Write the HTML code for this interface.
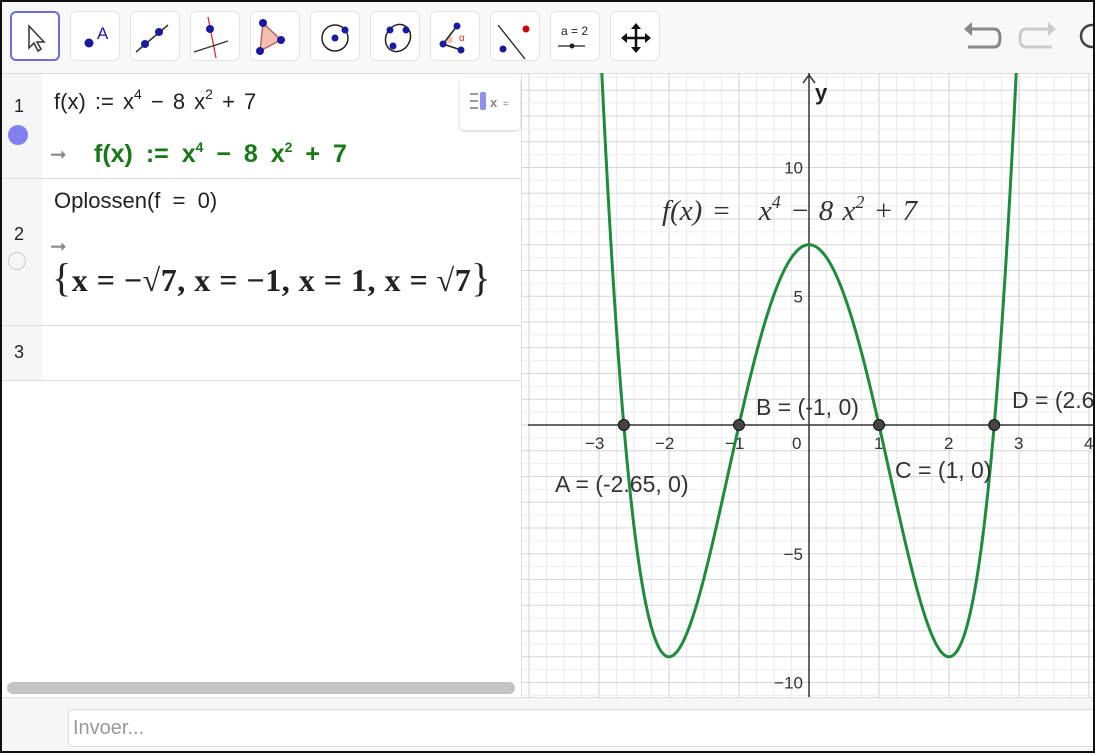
<!DOCTYPE html>
<html><head><meta charset="utf-8"><style>
body{margin:0;width:1095px;height:753px;overflow:hidden;font-family:"Liberation Sans",sans-serif;background:#fff;position:relative}
.frame{position:absolute;inset:0;border:2px solid #111;box-sizing:border-box;pointer-events:none;z-index:10}
.tb{position:absolute;left:0;top:0;width:1095px;height:73px;background:#f8f8f8;border-bottom:1px solid #ddd}
.btn{position:absolute;top:11px;width:50px;height:50px;background:#fff;border:1px solid #e3e3e3;border-radius:6px;box-sizing:border-box}
.btn svg{position:absolute;left:0;top:0}
.alg{position:absolute;left:2px;top:74px;width:519px;height:623px;background:#fff;border-right:1px solid #ddd}
.num{position:absolute;left:0;width:40px;background:#f6f6f6}
.row{position:absolute;left:0;width:519px;border-bottom:1px solid #ddd}
.t{position:absolute;font-size:22px;color:#222;white-space:nowrap}
sup{font-size:14px;vertical-align:10px}
.bottom{position:absolute;left:0;top:697px;width:1095px;height:56px;background:#f6f6f6;border-top:1px solid #ddd}
</style></head><body>
<div class="tb">
 <div class="btn" style="left:10px;border:2px solid #6d6de0"><svg width="48" height="48"><path d="M17 13 L17 35 L22 30 L26 38 L29 36 L25 29 L32 29 Z" fill="#fff" stroke="#333" stroke-width="1.5"/></svg></div>
 <div class="btn" style="left:70px"><svg width="50" height="50"><circle cx="18" cy="31" r="4.5" fill="#1a1aa0"/><text x="26" y="27" font-size="17" fill="#1a1aa0" font-family="Liberation Sans">A</text></svg></div>
 <div class="btn" style="left:130px"><svg width="50" height="50"><line x1="5" y1="40" x2="37" y2="13" stroke="#333" stroke-width="1.5"/><circle cx="14" cy="32" r="4" fill="#1a1aa0"/><circle cx="28" cy="20" r="4" fill="#1a1aa0"/></svg></div>
 <div class="btn" style="left:190px"><svg width="50" height="50"><line x1="17" y1="5" x2="25" y2="46" stroke="#c33" stroke-width="1.3"/><line x1="3" y1="40" x2="37" y2="29" stroke="#333" stroke-width="1.3"/><circle cx="19" cy="17" r="4" fill="#1a1aa0"/></svg></div>
 <div class="btn" style="left:250px"><svg width="50" height="50"><path d="M12 11 L30 28 L9 39 Z" fill="#f2c0b0" stroke="#b55" stroke-width="1.3"/><circle cx="12" cy="11" r="4" fill="#1a1aa0"/><circle cx="30" cy="28" r="4" fill="#1a1aa0"/><circle cx="9" cy="39" r="4" fill="#1a1aa0"/></svg></div>
 <div class="btn" style="left:310px"><svg width="50" height="50"><circle cx="24" cy="26" r="13" fill="none" stroke="#222" stroke-width="1.5"/><circle cx="24" cy="26" r="3.5" fill="#1a1aa0"/><circle cx="34" cy="18" r="3.5" fill="#1a1aa0"/></svg></div>
 <div class="btn" style="left:370px"><svg width="50" height="50"><ellipse cx="27" cy="26" rx="12" ry="14" transform="rotate(30 27 26)" fill="none" stroke="#222" stroke-width="1.5"/><circle cx="19" cy="18" r="3.5" fill="#1a1aa0"/><circle cx="35" cy="18" r="3.5" fill="#1a1aa0"/><circle cx="22" cy="34" r="3.5" fill="#1a1aa0"/></svg></div>
 <div class="btn" style="left:430px"><svg width="50" height="50"><path d="M14 32 L22 30 A9 9 0 0 0 19 23 Z" fill="#f2c0b0"/><line x1="12" y1="32" x2="26" y2="14" stroke="#222" stroke-width="1.5"/><line x1="12" y1="32" x2="30" y2="38" stroke="#222" stroke-width="1.5"/><circle cx="12" cy="32" r="3.5" fill="#1a1aa0"/><circle cx="26" cy="14" r="3.5" fill="#1a1aa0"/><circle cx="30" cy="38" r="3.5" fill="#1a1aa0"/><text x="28" y="29" font-size="10" fill="#c33">α</text></svg></div>
 <div class="btn" style="left:490px"><svg width="50" height="50"><line x1="7" y1="13" x2="34" y2="47" stroke="#222" stroke-width="1.3"/><circle cx="12" cy="37" r="3.5" fill="#1a1aa0"/><circle cx="35" cy="17" r="3.5" fill="#c00"/></svg></div>
 <div class="btn" style="left:550px"><svg width="50" height="50"><text x="10" y="23" font-size="12" fill="#222" font-family="Liberation Sans">a = 2</text><line x1="7" y1="34" x2="34" y2="34" stroke="#222" stroke-width="1.3"/><circle cx="21" cy="34" r="2.5" fill="#222"/></svg></div>
 <div class="btn" style="left:610px"><svg width="50" height="50"><path d="M25 14 V38 M13 26 H37" stroke="#111" stroke-width="2.5"/><path d="M25 11 L20 17 H30Z M25 41 L20 35 H30Z M10 26 L16 21 V31Z M40 26 L34 21 V31Z" fill="#111"/></svg></div>
 <svg style="position:absolute;left:960px;top:18px" width="135" height="40"><path d="M10 11 H34 Q40 11 40 20 Q40 29 34 29 H8" fill="none" stroke="#888" stroke-width="3"/><path d="M4 11 L12 4 V18Z" fill="#888"/><path d="M90 11 H66 Q60 11 60 20 Q60 29 66 29 H92" fill="none" stroke="#ccc" stroke-width="3"/><path d="M96 11 L88 4 V18Z" fill="#ccc"/><circle cx="132" cy="18" r="11" fill="none" stroke="#444" stroke-width="2.5"/></svg>
</div>

<div class="alg">
 <div class="num" style="top:0;height:306px"></div>
 <div class="row" style="top:0;height:104px"></div>
 <div class="row" style="top:0;height:251px"></div>
 <div class="row" style="top:0;height:306px"></div>
 <div class="t" style="left:12px;top:22px;font-size:18px">1</div>
 <div style="position:absolute;left:6px;top:51px;width:20px;height:20px;border-radius:50%;background:#8080f0"></div>
 <div class="t" style="left:52px;top:12px;word-spacing:3px">f(x) :=&nbsp;x<sup>4</sup>&nbsp;−&nbsp;8&nbsp;x<sup>2</sup>&nbsp;+&nbsp;7</div>
 <div class="t" style="left:48px;top:68px;color:#888;font-size:20px">➞</div>
 <div class="t" style="left:92px;top:65px;color:#187818;font-weight:bold;font-size:25px;word-spacing:6px">f(x) :=&nbsp;x<sup>4</sup>&nbsp;−&nbsp;8&nbsp;x<sup>2</sup>&nbsp;+&nbsp;7</div>
 <div style="position:absolute;left:458px;top:4px;width:60px;height:52px;background:#fff;box-shadow:0 1px 3px rgba(0,0,0,.2);border-radius:4px"><svg width="60" height="52"><path d="M10 16H18M10 23H18M10 30H18" stroke="#999" stroke-width="2"/><rect x="20" y="14" width="6" height="18" rx="2" fill="#9090ee"/><text x="30" y="29" font-size="13" fill="#888" font-weight="bold">x</text><text x="43" y="29" font-size="10" fill="#888">=</text></svg></div>
 <div class="t" style="left:12px;top:150px;font-size:18px">2</div>
 <div style="position:absolute;left:6px;top:178px;width:18px;height:18px;border-radius:50%;border:1px solid #ccc;box-sizing:border-box"></div>
 <div class="t" style="left:52px;top:114px">Oplossen(f &nbsp;= &nbsp;0)</div>
 <div class="t" style="left:48px;top:160px;color:#888;font-size:20px">➞</div>
 <div class="t" style="left:50px;top:180px;font-family:'Liberation Serif',serif;font-size:32px;font-weight:bold;letter-spacing:0.5px"><span style="font-weight:normal;font-size:40px">{</span>x&nbsp;=&nbsp;−√7,&nbsp;x&nbsp;=&nbsp;−1,&nbsp;x&nbsp;=&nbsp;1,&nbsp;x&nbsp;=&nbsp;√7<span style="font-weight:normal;font-size:40px">}</span></div>
 <div class="t" style="left:12px;top:268px;font-size:18px">3</div>
 <div style="position:absolute;left:5px;top:608px;width:508px;height:12px;border-radius:6px;background:#c4c4c4"></div>
</div>

<svg id="g" style="position:absolute;left:522px;top:73px" width="573" height="624"></svg>

<div class="bottom"><div style="position:absolute;left:68px;top:11px;width:1040px;height:36px;background:#fff;border:1px solid #ddd;border-radius:4px;font-size:20px;color:#999;line-height:36px;padding-left:4px">Invoer...</div></div>
<div class="frame"></div>
<script>
var g=document.getElementById('g'),ox=287,oy=352,sx=70,sy=25.75,h='';
for(var u=-5;u<=5;u+=0.25){var x=ox+u*sx;var maj=Math.abs(u-Math.round(u))<1e-6;h+='<line x1="'+x+'" y1="0" x2="'+x+'" y2="624" stroke="'+(maj?'#cfcfcf':'#eaeaea')+'"/>';}
for(var v=-12;v<=14;v+=0.5){var y=oy-v*sy;var maj=Math.abs(v-Math.round(v))<1e-6;h+='<line x1="0" y1="'+y+'" x2="573" y2="'+y+'" stroke="'+(maj?'#d6d6d6':'#eeeeee')+'"/>';}
h+='<line x1="6" y1="'+oy+'" x2="573" y2="'+oy+'" stroke="#333" stroke-width="1.5"/><line x1="'+ox+'" y1="0" x2="'+ox+'" y2="624" stroke="#333" stroke-width="1.5"/>';
h+='<path d="M'+(ox-6)+' 10 L'+ox+' 2 L'+(ox+6)+' 10" fill="none" stroke="#333" stroke-width="1.5"/>';
var lb=[[-3,'−3'],[-2,'−2'],[-1,'−1'],[1,'1'],[2,'2'],[3,'3'],[4,'4']];
lb.forEach(function(l){h+='<text x="'+(ox+l[0]*sx-(l[0]<0?14:5))+'" y="'+(oy+24)+'" font-size="17" fill="#333" font-family="Liberation Sans">'+l[1]+'</text>';});
h+='<text x="'+(ox-17)+'" y="'+(oy+24)+'" font-size="17" fill="#333" font-family="Liberation Sans">0</text>';
[[10,'10'],[5,'5'],[-5,'−5'],[-10,'−10']].forEach(function(l){h+='<text x="'+(ox-6)+'" y="'+(oy-l[0]*sy+6)+'" font-size="17" fill="#333" text-anchor="end" font-family="Liberation Sans">'+l[1]+'</text>';});
h+='<text x="'+(ox+6)+'" y="27" font-size="22" font-weight="bold" fill="#222" font-family="Liberation Sans">y</text>';
var p='';for(var x=-3.1;x<=3.1;x+=0.01){var y=Math.pow(x,4)-8*x*x+7;p+=(p?'L':'M')+(ox+x*sx).toFixed(1)+' '+(oy-y*sy).toFixed(1);}
h+='<path d="'+p+'" fill="none" stroke="#1e8c3c" stroke-width="3"/>';
[-2.6458,-1,1,2.6458].forEach(function(r){h+='<circle cx="'+(ox+r*sx)+'" cy="'+oy+'" r="5.5" fill="#444" stroke="#111"/>';});
h+='<text x="140" y="147" font-size="29" font-style="italic" fill="#333" font-family="Liberation Serif" word-spacing="2">f(x) = &#160;&#160;x<tspan font-size="18" dy="-12">4</tspan><tspan dy="12"> − 8 x</tspan><tspan font-size="18" dy="-12">2</tspan><tspan dy="12"> + 7</tspan></text>';
h+='<text x="234" y="342" font-size="23" fill="#333" font-family="Liberation Sans">B = (-1, 0)</text>';
h+='<text x="490" y="335" font-size="23" fill="#333" font-family="Liberation Sans">D = (2.65, 0)</text>';
h+='<text x="373" y="405" font-size="23" fill="#333" font-family="Liberation Sans">C = (1, 0)</text>';
h+='<text x="33" y="419" font-size="23" fill="#333" font-family="Liberation Sans">A = (-2.65, 0)</text>';
g.innerHTML=h;
</script>
</body></html>
